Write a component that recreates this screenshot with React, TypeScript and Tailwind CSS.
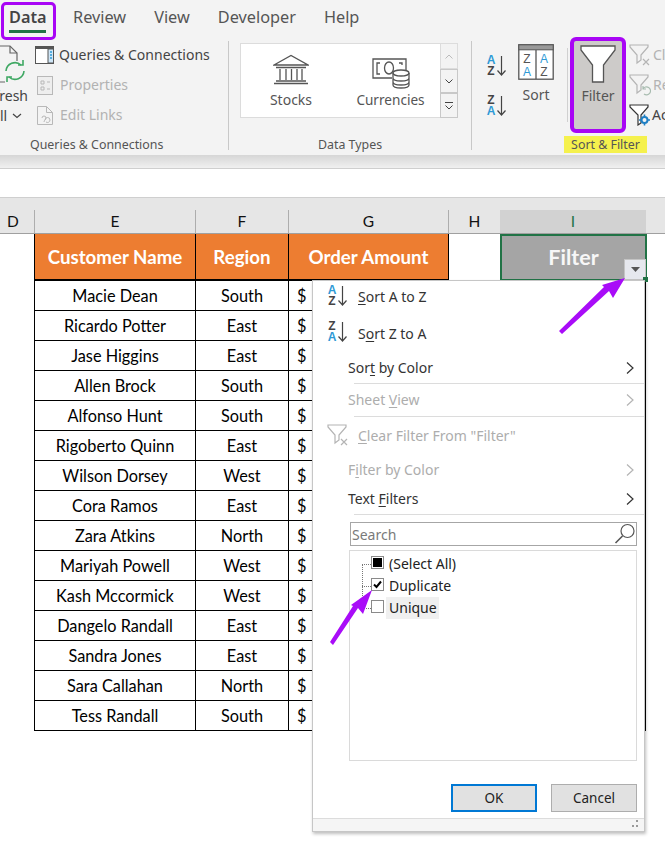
import React from "react";

const rows: [string, string][] = [
  ["Macie Dean", "South"],
  ["Ricardo Potter", "East"],
  ["Jase Higgins", "East"],
  ["Allen Brock", "South"],
  ["Alfonso Hunt", "South"],
  ["Rigoberto Quinn", "East"],
  ["Wilson Dorsey", "West"],
  ["Cora Ramos", "East"],
  ["Zara Atkins", "North"],
  ["Mariyah Powell", "West"],
  ["Kash Mccormick", "West"],
  ["Dangelo Randall", "East"],
  ["Sandra Jones", "East"],
  ["Sara Callahan", "North"],
  ["Tess Randall", "South"],
];

function SortIcon({ az }: { az: boolean }) {
  const blue = "#2e9ad6";
  const gray = "#444";
  return (
    <svg width="21" height="21" viewBox="0 0 21 21" fill="none" className="block">
      <text x="5" y="9" textAnchor="middle" fontSize="12" fontWeight="700" fontFamily="Liberation Sans" fill={az ? blue : gray}>{az ? "A" : "Z"}</text>
      <text x="5" y="19.5" textAnchor="middle" fontSize="12" fontWeight="700" fontFamily="Liberation Sans" fill={az ? gray : blue}>{az ? "Z" : "A"}</text>
      <path d="M15.500 1V20M11.500 15.500l4 4.500 4-4.500" stroke="#444" strokeWidth="1.2" />
    </svg>
  );
}

function FilterX({ refresh }: { refresh?: boolean }) {
  return (
    <svg width="22" height="22" viewBox="0 0 22 22" fill="none" stroke="#b4b4b4" strokeWidth="1.2" className="block shrink-0">
      <path d="M1 1h18v2l-7 8v5l-4 3v-8L1 3z" />
      {refresh ? <path d="M14 15a4 4 0 1 1 1 5M14 12v3h3" stroke="#a8bcb0" /> : <path d="M14 15l6 6M20 15l-6 6" />}
    </svg>
  );
}

function Chevron({ disabled }: { disabled?: boolean }) {
  return (
    <svg width="8" height="12" viewBox="0 0 8 12" fill="none" stroke={disabled ? "#b4b4b4" : "#333"} strokeWidth="1.2">
      <path d="M1 0.5L7 6 1 11.5" />
    </svg>
  );
}

function MenuRow({ box, disabled, sub, icon, children }: { box: string; disabled?: boolean; sub?: boolean; icon?: React.ReactNode; children: React.ReactNode }) {
  return (
    <div className={`flex items-center relative ${box} ${disabled ? "text-[#adadad]" : "text-[#333]"}`}>
      {icon}
      <span className="flex-1">{children}</span>
      {sub && (
        <span className="mr-[10px]">
          <Chevron disabled={disabled} />
        </span>
      )}
    </div>
  );
}

const Sep = () => <div className="ml-[41px] h-px bg-[#dcdcdc]" />;

function Check({ children, highlight, mark }: { children: React.ReactNode; highlight?: boolean; mark?: "square" | "tick" }) {
  return (
    <div className="flex items-center h-[22px]">
      <div className="relative w-[9px] h-[22px] shrink-0">
        <div className="absolute left-0 top-[11px] w-[9px] border-t border-dotted border-[#777]" />
      </div>
      <div className="w-[13px] h-[13px] mb-[3px] border border-[#8a8a8a] bg-white flex items-center justify-center shrink-0">
        {mark === "square" && <div className="w-[9px] h-[9px] bg-black" />}
        {mark === "tick" && (
          <svg width="11" height="11" viewBox="0 0 11 11" fill="none" stroke="#000" strokeWidth="2">
            <path d="M2 5.500l2.500 2.500L9 2.500" />
          </svg>
        )}
      </div>
      <span className={`ml-[2px] pl-[3px] pr-[2px] h-[22px] flex items-center text-[#222] ${highlight ? "bg-[#f0f0f0]" : ""}`}>{children}</span>
    </div>
  );
}

export default function App() {
  const calibri = { fontFamily: "Lato, 'Noto Sans', sans-serif" };
  return (
    <div className="relative w-[665px] h-[841px] overflow-hidden bg-white" style={{ fontFamily: "'Noto Sans', sans-serif" }}>
      {/* Tabs */}
      <div className="h-[40px] bg-[#f3f3f3] flex items-start text-[16.3px] text-[#555] pl-[9px] gap-[25px] pt-[5px] leading-[24px]">
        <div className="relative font-semibold text-[#444] w-[37px]">
          Data
          <div className="absolute left-0 right-0 top-[25px] h-[3px] bg-[#217346]" />
          <div className="absolute left-[-8px] top-[-3px] w-[55px] h-[38px] border-[3px] border-[#a805f5] rounded-[5px]" />
        </div>
        <span className="ml-[2px]">Review</span>
        <span className="ml-[3px]">View</span>
        <span className="ml-[3px]">Developer</span>
        <span className="ml-[3px]">Help</span>
      </div>

      {/* Ribbon */}
      <div className="h-[115px] bg-[#f3f3f3] flex text-[14px] leading-[20px] text-[#555]">
        {/* Queries group */}
        <div className="w-[229px] border-r border-[#c8c8c8] my-[1px] h-[109px] flex flex-col shrink-0">
          <div className="flex h-[94px] shrink-0">
            <div className="w-[29px] shrink-0 relative overflow-hidden flex flex-col items-end pr-[1px]">
              <svg width="28" height="42" viewBox="0 0 28 42" fill="none" className="block mt-[3px]">
                <path d="M0 2h10l7 7v8" stroke="#666" strokeWidth="1.2" />
                <path d="M10 2v7h7M0 38h5" stroke="#666" strokeWidth="1.2" />
                <path d="M6 27a9 9 0 0 1 15-6M24 27a9 9 0 0 1-15 6" stroke="#3fa863" strokeWidth="1.6" />
                <path d="M18 21h5v-5M12 33H7v5" stroke="#3fa863" strokeWidth="1.6" />
              </svg>
              <div className="leading-[20px] text-[#444] whitespace-nowrap">fresh</div>
              <div className="flex items-center w-full leading-[20px] text-[#444]">
                <span>ll</span>
                <svg width="10" height="6" viewBox="0 0 10 6" fill="none" stroke="#444" strokeWidth="1.2" className="ml-[5px]"><path d="M1 1l4 3.500L9 1" /></svg>
              </div>
            </div>
            <div className="ml-[6px] pt-[4px] flex flex-col gap-[10px] whitespace-nowrap">
              <div className="flex items-center gap-[5px] h-[20px] text-[#444]">
                <svg width="19" height="18" viewBox="0 0 19 18" fill="none">
                  <rect x="0.5" y="0.5" width="18" height="17" stroke="#555" fill="#fff" />
                  <rect x="0.5" y="0.5" width="18" height="2.5" fill="#555" />
                  <rect x="13" y="3" width="5.5" height="14" fill="#cfe6f7" stroke="#555" />
                  <path d="M15 6h2M15 9h2M15 12h2" stroke="#2e9ad6" strokeWidth="1.4" />
                </svg>
                Queries &amp; Connections
              </div>
              <div className="flex items-center gap-[7px] h-[20px] text-[#b2b2b2] ml-[2px]">
                <svg width="16" height="19" viewBox="0 0 16 19" fill="none" stroke="#b8b8b8">
                  <rect x="0.5" y="0.5" width="15" height="18" fill="#eee" />
                  <path d="M4 5h3v3H4zM4 11h3v3H4zM10 6h3M10 13h3" />
                </svg>
                Properties
              </div>
              <div className="flex items-center gap-[7px] h-[20px] text-[#b2b2b2] ml-[2px]">
                <svg width="16" height="19" viewBox="0 0 16 19" fill="none" stroke="#b8b8b8">
                  <path d="M.5.5h9l6 6v12H.5zM9.500.5v6h6" />
                  <path d="M5 12a2 2 0 0 1 4 0c0 2-2 2-2 4M8 14a2.500 2.500 0 0 1 5 0 2.500 2.500 0 0 1-4 2" />
                </svg>
                Edit Links
              </div>
            </div>
          </div>
          <div className="text-[12.4px] h-[15px] leading-[20px] text-[#555] pl-[30px]">Queries &amp; Connections</div>
        </div>

        {/* Data types group */}
        <div className="w-[243px] shrink-0 border-r border-[#c8c8c8] my-[1px] h-[109px] flex flex-col">
          <div className="ml-[11px] mt-[2px] flex h-[75px] w-[218px] shrink-0">
            <div className="flex-1 flex bg-white border border-[#dcdcdc] border-r-0">
              <div className="w-[100px] flex flex-col items-center pt-[10px]">
                <svg width="36" height="31" viewBox="0 0 36 31" fill="none" stroke="#555" strokeWidth="1.3">
                  <path d="M1 11L18 1.500 35 11zM3 13.500h30M7 15v11M13 15v11M18.500 15v11M24 15v11M29 15v11M3 27h30M1 29.500h34" />
                </svg>
                <span className="mt-[5px] text-[#555]">Stocks</span>
              </div>
              <div className="flex-1 flex flex-col items-center pt-[14px]">
                <svg width="38" height="31" viewBox="0 0 38 31" fill="none" stroke="#555" strokeWidth="1.3">
                  <path d="M20 20H1V1h33v13M8 5H5v11h3M27 5h3v2" />
                  <ellipse cx="17" cy="10" rx="4.500" ry="6" />
                  <ellipse cx="29" cy="15" rx="8" ry="3" fill="#fff" />
                  <path d="M21 15v12c0 4 16 4 16 0V15M21 20c0 4 16 4 16 0M21 24c0 4 16 4 16 0" />
                </svg>
                <span className="mt-[1px] text-[#555] text-[13.6px]">Currencies</span>
              </div>
            </div>
            <div className="w-[18px] flex flex-col shrink-0">
              <div className="h-[26px] border border-[#dcdcdc] bg-[#f3f3f3] flex items-center justify-center">
                <svg width="8" height="5" viewBox="0 0 8 5" fill="none" stroke="#bbb"><path d="M.5 4.500L4 1l3.500 3.500" /></svg>
              </div>
              <div className="h-[24px] border border-[#c8c8c8] flex items-center justify-center">
                <svg width="8" height="5" viewBox="0 0 8 5" fill="none" stroke="#444"><path d="M.5.5L4 4 7.500.5" /></svg>
              </div>
              <div className="h-[25px] border border-[#c8c8c8] flex items-center justify-center">
                <svg width="8" height="8" viewBox="0 0 8 8" fill="none" stroke="#444"><path d="M0 .5h8M.5 3.500L4 7l3.500-3.500" /></svg>
              </div>
            </div>
          </div>
          <div className="text-[12.4px] mt-[17px] h-[15px] text-center">Data Types</div>
        </div>

        {/* Sort & Filter */}
        <div className="flex-1 flex flex-col relative min-w-0">
          <div className="flex h-[80px] shrink-0">
            <div className="ml-[14px] pt-[15px] flex flex-col gap-[19px] w-[21px] shrink-0">
              <SortIcon az />
              <SortIcon az={false} />
            </div>
            <div className="ml-[11px] pt-[4px] flex flex-col items-center w-[38px] shrink-0 -translate-x-[1px]">
              <svg width="36" height="36" viewBox="0 0 36 36" fill="none">
                <rect x="0.8" y="0.8" width="34.400" height="34.400" fill="#fff" stroke="#555" strokeWidth="1.3" />
                <rect x="0.8" y="0.8" width="34.400" height="5" fill="#999" stroke="#555" strokeWidth="1" />
                <path d="M18 6v29" stroke="#555" strokeWidth="1.3" />
                <text x="9" y="19" textAnchor="middle" fontSize="12" fontFamily="Liberation Sans" fill="#555">Z</text>
                <text x="9" y="32" textAnchor="middle" fontSize="12" fontFamily="Liberation Sans" fill="#2e9ad6">A</text>
                <text x="26" y="19" textAnchor="middle" fontSize="12" fontFamily="Liberation Sans" fill="#2e9ad6">A</text>
                <text x="26" y="32" textAnchor="middle" fontSize="12" fontFamily="Liberation Sans" fill="#555">Z</text>
              </svg>
              <span className="mt-[5px] text-[#555]">Sort</span>
            </div>
            <div className="ml-[11px] mt-[8px] h-[74px] w-px bg-[#d0d0d0] shrink-0" />
            <div className="relative ml-[6px] w-[48px] h-[90px] shrink-0 bg-[#cdcbc9] flex flex-col items-center pt-[5px]">
              <svg width="36" height="38" viewBox="0 0 36 38" fill="#fff" stroke="#555" strokeWidth="1.3">
                <path d="M1 1h34v4L23.500 20v17h-11V20L1 5z" />
              </svg>
              <span className="mt-[3px] text-[#555]">Filter</span>
              <div className="absolute left-[-4px] top-[-3px] w-[56px] h-[96px] border-[4px] border-[#a805f5] rounded-[6px]" />
            </div>
            <div className="ml-[7px] flex flex-col pt-[4px] gap-[8px] text-[#b2b2b2] whitespace-nowrap">
              <div className="flex items-center gap-[2px] h-[22px]"><FilterX /><span>Cl</span></div>
              <div className="flex items-center gap-[2px] h-[22px]"><FilterX refresh /><span>Re</span></div>
              <div className="flex items-center gap-[1px] h-[22px] text-[#444]">
                <svg width="22" height="22" viewBox="0 0 22 22" fill="none" stroke="#333" strokeWidth="1.2" className="shrink-0">
                  <path d="M1 1h18v2l-7 8v8l-3 2v-10L1 3z" fill="#fff" />
                  <circle cx="15.500" cy="16" r="3" stroke="#1e7fc4" strokeWidth="2" />
                  <path d="M15.500 10.500v2M15.500 19.500v2M10 16h2M19 16h2" stroke="#1e7fc4" strokeWidth="1.6" />
                </svg>
                <span>Ac</span>
              </div>
            </div>
          </div>
          <div className="ml-[92px] mt-[16px] w-[83px] h-[17px] bg-[#f5f14d] text-[12.4px] leading-[17px] text-center text-[#555] relative">Sort &amp; Filter</div>
        </div>
      </div>

      {/* Ribbon shadow */}
      <div className="h-[13px] bg-gradient-to-b from-[#d6d6d6] to-[#f0f0f0]" />
      {/* Formula bar */}
      <div className="h-[30px] bg-white border-y border-[#cfcfcf]" />
      {/* Strip */}
      <div className="h-[12px] bg-[#e6e6e6]" />
      {/* Column headers */}
      <div className="flex h-[24px] bg-[#e6e6e6] border-b border-[#a0a0a0] text-[15.5px] leading-[23px] text-[#111] text-center" style={calibri}>
        <div className="w-[35px] border-r border-[#adadad] text-left pl-[7px]">D</div>
        <div className="w-[161px] border-r border-[#adadad]">E</div>
        <div className="w-[93px] border-r border-[#adadad]">F</div>
        <div className="w-[160px] border-r border-[#adadad]">G</div>
        <div className="w-[51px]">H</div>
        <div className="w-[146px] bg-[#d2d2d2] text-[#217346]">I</div>
      </div>

      {/* Sheet */}
      <div className="flex flex-col" style={calibri}>
        <div className="flex h-[47px] text-[18.7px] font-bold text-white text-center">
          <div className="w-[34px]" />
          <div className="w-[162px] bg-[#ed7d31] border-x border-b-2 border-black flex items-center justify-center pt-[2px]">Customer Name</div>
          <div className="w-[93px] bg-[#ed7d31] border-r border-b-2 border-black flex items-center justify-center pt-[2px]">Region</div>
          <div className="w-[160px] bg-[#ed7d31] border-r border-b-2 border-black flex items-center justify-center pt-[2px]">Order Amount</div>
          <div className="w-[51px]" />
          <div className="relative w-[147px] bg-[#a5a5a5] border-2 border-[#217346] flex items-center justify-center text-[#f7f7f7] text-[21.5px]">
            Filter
            <div className="absolute right-[-1px] bottom-[-1px] w-[22px] h-[21px] bg-[#e6e8ee] border border-[#c4c4c4] flex items-center justify-center">
              <svg width="9" height="5" viewBox="0 0 9 5" fill="#555"><path d="M0 0h9L4.500 5z" /></svg>
            </div>
            <div className="absolute right-[-3px] bottom-[-3px] w-[5px] h-[5px] bg-[#217346]" />
          </div>
        </div>
        {rows.map(([name, region]) => (
          <div key={name} className="flex h-[30px] text-[16.3px] text-black text-center">
            <div className="w-[34px]" />
            <div className="w-[162px] border-x border-b border-black flex items-center justify-center pt-[2px]">{name}</div>
            <div className="w-[93px] border-r border-b border-black flex items-center justify-center pt-[2px]">{region}</div>
            <div className="w-[160px] border-r border-b border-black flex items-center pl-[8px] pt-[2px]">$</div>
            <div className="w-[197px] border-r border-b border-black" />
          </div>
        ))}
      </div>

      {/* Filter dropdown */}
      <div className="absolute left-[312px] top-[280px] w-[333px] h-[552px] bg-white border border-[#c6c6c6] shadow-[1px_2px_3px_rgba(0,0,0,0.25)] flex flex-col text-[14px] leading-[20px]">
        <MenuRow box="h-[31px] pt-[2px] pl-[14px]" icon={<span className="mr-[10px] flex -mt-[4px]"><SortIcon az /></span>}>
          <span className="underline underline-offset-2">S</span>ort A to Z
        </MenuRow>
        <MenuRow box="h-[42px] pt-[2px] pl-[14px]" icon={<span className="mr-[10px] flex -mt-[4px]"><SortIcon az={false} /></span>}>
          S<span className="underline underline-offset-2">o</span>rt Z to A
        </MenuRow>
        <MenuRow box="h-[29px] pb-[1px] pl-[35px]" sub>
          Sor<span className="underline underline-offset-2">t</span> by Color
        </MenuRow>
        <Sep />
        <MenuRow box="h-[32px] pl-[35px]" sub disabled>
          Sheet <span className="underline underline-offset-2">V</span>iew
        </MenuRow>
        <Sep />
        <MenuRow box="h-[38px] pl-[14px]" disabled icon={<span className="mr-[9px] flex -mt-[2px]"><FilterX /></span>}>
          <span className="underline underline-offset-2">C</span>lear Filter From "Filter"
        </MenuRow>
        <MenuRow box="h-[30px] pl-[35px]" sub disabled>
          F<span className="underline underline-offset-2">i</span>lter by Color
        </MenuRow>
        <MenuRow box="h-[30px] pb-[1px] pl-[35px]" sub>
          Text <span className="underline underline-offset-2">F</span>ilters
        </MenuRow>
        <Sep />
        <div className="ml-[37px] mt-[7px] w-[287px] h-[24px] border border-[#a6a6a6] flex items-center justify-between pl-[1px] text-[#7a7a7a]">
          <span className="pt-[2px]">Search</span>
          <svg width="22" height="22" viewBox="0 0 22 22" fill="none" stroke="#555" strokeWidth="1.2">
            <circle cx="13.500" cy="8" r="6.500" />
            <path d="M8.500 13L1.500 20" strokeWidth="1.600" />
          </svg>
        </div>
        <div className="ml-[36px] mt-[4px] w-[288px] h-[211px] border border-[#dadada] pl-[12px] pt-[2px] relative">
          <div className="absolute left-[12px] top-[13px] h-[46px] border-l border-dotted border-[#777]" />
          <Check mark="square">(Select All)</Check>
          <Check mark="tick">Duplicate</Check>
          <Check highlight>Unique</Check>
        </div>
        <div className="flex ml-[138px] mt-[23px] gap-[14px] text-[13.5px]">
          <button className="w-[86px] h-[28px] bg-[#e1e1e1] border-2 border-[#0078d4] text-[#222]">OK</button>
          <button className="w-[86px] h-[28px] bg-[#e1e1e1] border border-[#adadad] text-[#222]">Cancel</button>
        </div>
        <div className="mt-[6px] flex-1 border-t border-[#dcdcdc] bg-[#f5f5f5] flex items-end justify-end pr-[5px] pb-[2px]">
          <svg width="10" height="10" viewBox="0 0 10 10" fill="#9a9a9a">
            <rect x="7" y="1" width="2" height="2" /><rect x="3" y="6" width="2" height="2" /><rect x="7" y="6" width="2" height="2" />
          </svg>
        </div>
      </div>

      {/* Annotation arrows */}
      <svg className="absolute left-0 top-0 pointer-events-none" width="665" height="841" viewBox="0 0 665 841" fill="#a90cf8">
        <path d="M625 278L613 298 609 291 562 334 559 331 604 287 602 285z" />
        <path d="M372 590L363 614 358 608 333 645 330 642 353 606 351 605z" />
      </svg>
    </div>
  );
}
